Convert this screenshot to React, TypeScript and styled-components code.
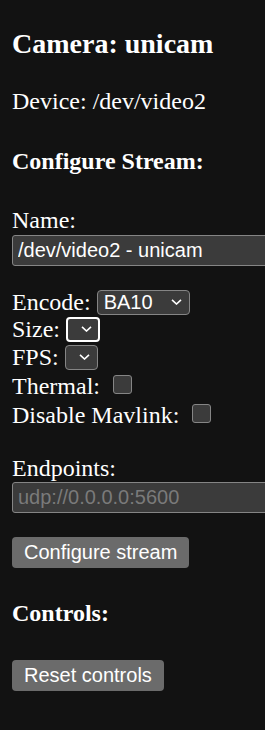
import React from "react";
import styled, { createGlobalStyle } from "styled-components";

const GlobalStyle = createGlobalStyle`
  html, body {
    overflow-x: hidden;
  }
  body {
    margin: 0;
    background: #121212;
    color: #ffffff;
    font-family: "Liberation Serif", "Times New Roman", serif;
    font-size: 24px;
    line-height: 1.15;
  }
`;

const Page = styled.div`
  padding: 1px 12px 0;
  margin-top: -1px;
`;

const Title = styled.h3`
  font-size: 28px;
  font-weight: bold;
  margin: 28px 0;
`;

const Info = styled.p`
  margin: 28px 0;
`;

const Section = styled.h4`
  font-size: 24px;
  font-weight: bold;
  margin: 32px 0;
`;

const Form = styled.form`
  display: flex;
  flex-direction: column;
  align-items: flex-start;
`;

const Label = styled.div<{ $top?: number }>`
  height: 27.6px;
  margin-top: ${(p) => p.$top ?? 0}px;
  white-space: nowrap;
`;

const TextInput = styled.input`
  box-sizing: border-box;
  width: 300px;
  height: 31px;
  flex-shrink: 0;
  padding: 0 5px;
  background: #3b3b3b;
  border: 1.5px solid #858585;
  border-radius: 3px;
  color: #ffffff;
  font-family: "Liberation Sans", Arial, sans-serif;
  font-size: 20px;
  outline: none;
  &::placeholder {
    color: #7a7a7a;
  }
`;

const Row = styled.div<{ $h: number; $top?: number }>`
  display: flex;
  align-items: center;
  gap: 6px;
  height: ${(p) => p.$h}px;
  margin-top: ${(p) => p.$top ?? 0}px;
  white-space: nowrap;
`;

const SelectWrap = styled.div`
  position: relative;
  display: inline-flex;
`;

const Select = styled.select<{ $w: number; $focus?: boolean }>`
  appearance: none;
  box-sizing: border-box;
  width: ${(p) => p.$w}px;
  height: ${(p) => (p.$focus ? 25 : 25)}px;
  padding: 0 0 0 6px;
  background: #3b3b3b;
  border: ${(p) => (p.$focus ? "2.5px solid #ffffff" : "1.5px solid #858585")};
  border-radius: 4px;
  color: #ffffff;
  font-family: "Liberation Sans", Arial, sans-serif;
  font-size: 20px;
  outline: none;
`;

const Arrow = styled.svg`
  position: absolute;
  right: 8px;
  top: 50%;
  margin-top: -3px;
  pointer-events: none;
`;

const Check = styled.input`
  appearance: none;
  box-sizing: border-box;
  width: 19px;
  height: 19px;
  margin: 0 0 0 7px;
  background: #3b3b3b;
  border: 1.5px solid #858585;
  border-radius: 3px;
  align-self: flex-start;
  margin-top: 2.5px;
`;

const Button = styled.button<{ $top?: number }>`
  box-sizing: border-box;
  height: 31px;
  padding: 0 12px;
  margin-top: ${(p) => p.$top ?? 0}px;
  background: #6b6b6b;
  border: none;
  border-radius: 4px;
  color: #ffffff;
  font-family: "Liberation Sans", Arial, sans-serif;
  font-size: 20px;
  white-space: nowrap;
`;

const Chevron = () => (
  <Arrow width="11" height="6" viewBox="0 0 11 6">
    <polyline points="1,0.8 5.5,5 10,0.8" fill="none" stroke="#ffffff" strokeWidth="1.6" />
  </Arrow>
);

const Dropdown: React.FC<{ w: number; value?: string; focus?: boolean }> = ({ w, value, focus }) => (
  <SelectWrap>
    <Select $w={w} $focus={focus} defaultValue={value}>
      {value && <option>{value}</option>}
    </Select>
    <Chevron />
  </SelectWrap>
);

export default function App() {
  return (
    <Page>
      <GlobalStyle />
      <Title>Camera: unicam</Title>
      <Info>Device: /dev/video2</Info>
      <Section>Configure Stream:</Section>
      <Form onSubmit={(e) => e.preventDefault()}>
        <Label>Name:</Label>
        <TextInput defaultValue="/dev/video2 - unicam" />
        <Row $h={28} $top={22.4}>
          Encode: <Dropdown w={93} value="BA10" />
        </Row>
        <Row $h={26}>
          Size: <Dropdown w={34} focus />
        </Row>
        <Row $h={30}>
          FPS: <Dropdown w={33} />
        </Row>
        <Row $h={29}>
          Thermal: <Check type="checkbox" />
        </Row>
        <Row $h={29}>
          Disable Mavlink: <Check type="checkbox" />
        </Row>
        <Label $top={24.5}>Endpoints:</Label>
        <TextInput placeholder="udp://0.0.0.0:5600" />
        <Button $top={24} type="submit">Configure stream</Button>
      </Form>
      <Section>Controls:</Section>
      <Button type="button">Reset controls</Button>
    </Page>
  );
}
